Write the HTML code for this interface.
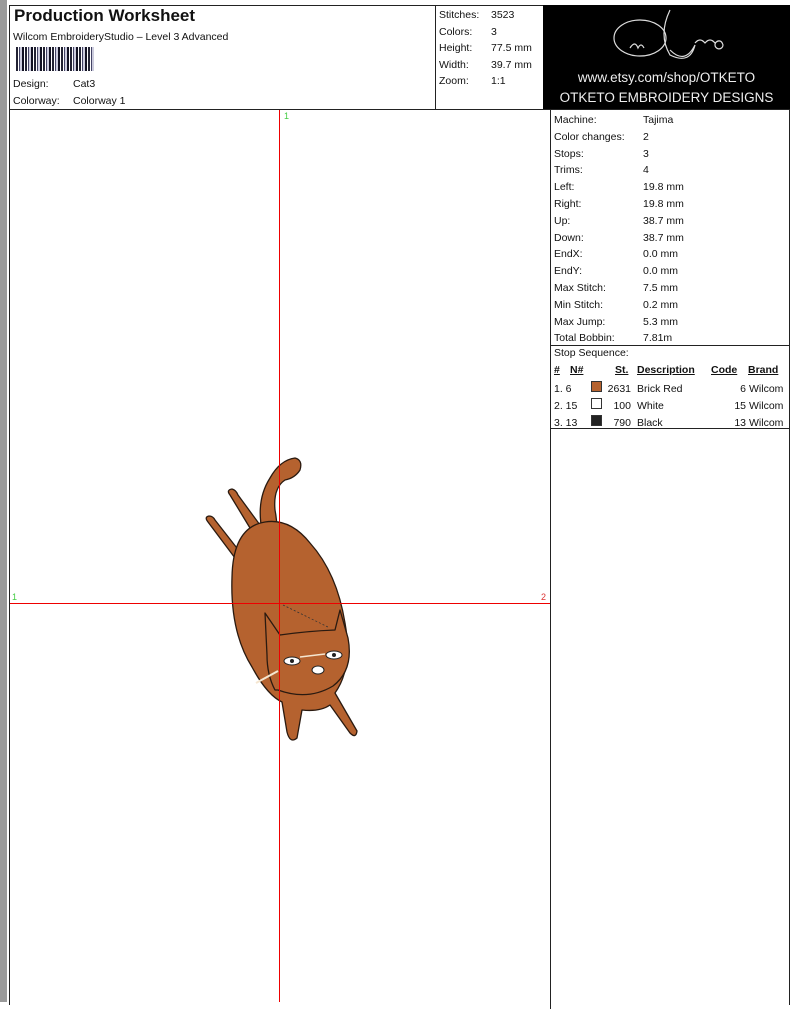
<!DOCTYPE html><html><head><style>
body{margin:0;width:794px;height:1002px;background:#fff;position:relative;overflow:hidden;font-family:"Liberation Sans",Arial,sans-serif;color:#111}
.a{position:absolute}
.t{font-size:10.5px;white-space:nowrap}
</style></head><body>
<div class="a" style="left:0;top:0;width:7px;height:1002px;background:#9a9a9a"></div>
<div class="a" style="left:9px;top:5px;width:781px;height:1000px;border:1px solid #222;box-sizing:border-box;border-bottom:none"></div>
<div class="a" style="left:9px;top:109px;width:781px;height:1px;background:#222"></div>
<div class="a" style="left:435px;top:5px;width:1px;height:105px;background:#222"></div>
<div class="a" style="left:550px;top:109px;width:1px;height:900px;background:#222"></div>
<div class="a" style="left:543px;top:5px;width:247px;height:104px;background:#000"></div>
<div class="a" style="left:550px;top:345px;width:240px;height:1px;background:#222"></div>
<div class="a" style="left:550px;top:428px;width:240px;height:1px;background:#222"></div>
<div class="a" style="left:14px;top:6px;font-size:17px;font-weight:bold">Production Worksheet</div>
<div class="a t" style="left:13px;top:31px">Wilcom EmbroideryStudio – Level 3 Advanced</div>
<div class="a" style="left:16px;top:47px;width:78px;height:24px;background:repeating-linear-gradient(90deg,#223 0 2px,#fff 2px 3px,#446 3px 4px,#ccd 4px 6px,#112 6px 8px,#fff 8px 9px)"></div>
<div class="a t" style="left:13px;top:78px">Design:</div><div class="a t" style="left:73px;top:78px">Cat3</div>
<div class="a t" style="left:13px;top:95px">Colorway:</div><div class="a t" style="left:73px;top:95px">Colorway 1</div>
<div class="a t" style="left:439px;top:7px;line-height:16.5px">Stitches:<br>Colors:<br>Height:<br>Width:<br>Zoom:</div>
<div class="a t" style="left:491px;top:7px;line-height:16.5px">3523<br>3<br>77.5 mm<br>39.7 mm<br>1:1</div>
<svg class="a" style="left:600px;top:8px" width="140" height="58"><g fill="none" stroke="#ddd" stroke-width="1.2"><ellipse cx="40" cy="30" rx="26" ry="18"/><path d="M30 40q5-8 8 0q3-6 6 0M70 2q-12 25 0 45q20 10 25-10q-10 20-25 5M95 35q5-6 10 0q5-6 10 0q6-5 8 2a4 4 0 1 1-3-4"/></g></svg>
<div class="a" style="left:543px;top:70px;width:247px;text-align:center;color:#eee;font-size:13.5px">www.etsy.com/shop/OTKETO</div>
<div class="a" style="left:543px;top:90px;width:247px;text-align:center;color:#eee;font-size:13.5px">OTKETO EMBROIDERY DESIGNS</div>
<div class="a t" style="left:554px;top:112px;line-height:16.8px">Machine:<br>Color changes:<br>Stops:<br>Trims:<br>Left:<br>Right:<br>Up:<br>Down:<br>EndX:<br>EndY:<br>Max Stitch:<br>Min Stitch:<br>Max Jump:<br>Total Bobbin:</div>
<div class="a t" style="left:643px;top:112px;line-height:16.8px">Tajima<br>2<br>3<br>4<br>19.8 mm<br>19.8 mm<br>38.7 mm<br>38.7 mm<br>0.0 mm<br>0.0 mm<br>7.5 mm<br>0.2 mm<br>5.3 mm<br>7.81m</div>
<div class="a t" style="left:554px;top:347px">Stop Sequence:</div>
<div class="a t" style="left:554px;top:364px;font-weight:bold;text-decoration:underline">#</div>
<div class="a t" style="left:570px;top:364px;font-weight:bold;text-decoration:underline">N#</div>
<div class="a t" style="left:615px;top:364px;font-weight:bold;text-decoration:underline">St.</div>
<div class="a t" style="left:637px;top:364px;font-weight:bold;text-decoration:underline">Description</div>
<div class="a t" style="left:711px;top:364px;font-weight:bold;text-decoration:underline">Code</div>
<div class="a t" style="left:748px;top:364px;font-weight:bold;text-decoration:underline">Brand</div>
<div class="a t" style="left:554px;top:381px;line-height:17px">1. 6<br>2. 15<br>3. 13</div>
<div class="a" style="left:591px;top:381px;width:9px;height:9px;background:#b5622f;border:1px solid #333"></div>
<div class="a" style="left:591px;top:398px;width:9px;height:9px;background:#fff;border:1px solid #333"></div>
<div class="a" style="left:591px;top:415px;width:9px;height:9px;background:#222;border:1px solid #333"></div>
<div class="a t" style="left:598px;top:381px;width:33px;text-align:right;line-height:17px">2631<br>100<br>790</div>
<div class="a t" style="left:637px;top:381px;line-height:17px">Brick Red<br>White<br>Black</div>
<div class="a t" style="left:700px;top:381px;width:46px;text-align:right;line-height:17px">6<br>15<br>13</div>
<div class="a t" style="left:749px;top:381px;line-height:17px">Wilcom<br>Wilcom<br>Wilcom</div>
<svg class="a" style="left:0;top:0" width="794" height="1002">
<g fill="#b5622f" stroke="#2a1a10" stroke-width="1.3" stroke-linejoin="round">
<path d="M262 530q-6-30 8-52q10-18 25-20q8 2 5 12q-5 8-15 10q-12 8-10 30q2 10 2 22z"/>
<path d="M250 528l-20-33q-4-5 2-6q4 1 6 6l22 30z"/>
<path d="M235 558l-27-36q-4-5 1-6q4 0 6 4l25 32z"/>
<path d="M265 522q-32 5-33 55q-2 55 20 90q15 28 30 35l5 30q3 12 10 6l5-28q18 2 28-5l20 28q6 6 7-2l-22-38q18-25 10-70q-8-50-35-80q-20-25-45-21z"/>
<path d="M275 690q-8-15-8-35l-2-42l15 22q28-4 55-5l5-20l8 28q6 32-15 48q-25 15-55 4z"/>
</g>
<g fill="#fff" stroke="#222"><ellipse cx="292" cy="661" rx="8" ry="4"/><ellipse cx="334" cy="655" rx="8" ry="4"/><ellipse cx="318" cy="670" rx="6" ry="4"/></g>
<circle cx="292" cy="661" r="2" fill="#222"/><circle cx="334" cy="655" r="2" fill="#222"/>
<path d="M256 683l22-12" stroke="#f5e6d0" stroke-width="2"/>
<path d="M300 657l25-3" stroke="#f5e6d0" stroke-width="1.5"/>
<path d="M283 605l45 22" stroke="#333" stroke-width="0.8" stroke-dasharray="2 2"/>
<rect x="279" y="110" width="1" height="892" fill="#e00"/>
<rect x="10" y="603" width="540" height="1" fill="#e00"/>
</svg>
<div class="a" style="left:284px;top:111px;font-size:9px;color:#4c4">1</div>
<div class="a" style="left:12px;top:592px;font-size:9px;color:#4c4">1</div>
<div class="a" style="left:541px;top:592px;font-size:9px;color:#d33">2</div>
</body></html>
